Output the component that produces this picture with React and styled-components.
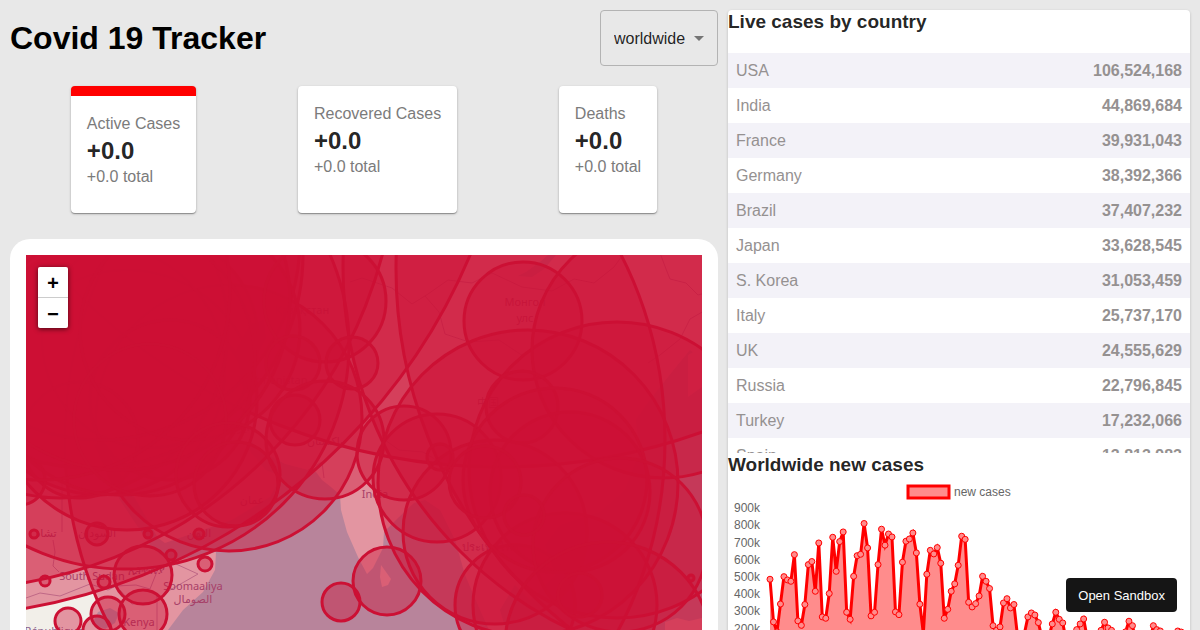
import { useState } from 'react'
import styled, { createGlobalStyle } from 'styled-components'

const countries = [
    { name: 'USA', cases: 106524168 },
    { name: 'India', cases: 44869684 },
    { name: 'France', cases: 39931043 },
    { name: 'Germany', cases: 38392366 },
    { name: 'Brazil', cases: 37407232 },
    { name: 'Japan', cases: 33628545 },
    { name: 'S. Korea', cases: 31053459 },
    { name: 'Italy', cases: 25737170 },
    { name: 'UK', cases: 24555629 },
    { name: 'Russia', cases: 22796845 },
    { name: 'Turkey', cases: 17232066 },
    { name: 'Spain', cases: 13813983 },
]

// new cases per day, in thousands
const history = [
    487, 239, 181, 343, 502, 483, 475, 630, 245, 219, 340, 572, 590, 417, 698,
    268, 260, 404, 731, 533, 706, 762, 295, 254, 504, 624, 632, 811, 669, 274,
    295, 572, 778, 685, 750, 733, 297, 281, 586, 708, 721, 756, 640, 342, 171,
    516, 655, 634, 671, 580, 260, 312, 417, 460, 568, 737, 719, 353, 326, 345,
    390, 504, 475, 433, 217, 190, 210, 349, 374, 320, 340, 161, 150, 171, 268,
    291, 279, 235, 150, 140, 150, 227, 295, 254, 233, 132, 125, 150, 194, 227,
    256, 150, 132, 130, 150, 190, 237, 204, 190, 150, 130, 130, 181, 243, 217,
    130, 110, 110, 115, 130, 217, 194, 186, 120, 100, 100, 150, 186, 180,
]

// cx, cy, rx, ry (ry only where the projection stretches the circle)
const circles = [
    [-76, 24, 593], [-51, 141, 448], [365, 440, 300, 355], [500, -135, 602],
    [744, 268, 401], [854, 269, 458], [125, 345, 224], [229, 418, 133],
    [127, 400, 130], [100, 370, 125], [150, 340, 108], [60, 330, 168],
    [170, 400, 80], [80, 440, 58], [100, 240, 200], [20, 480, 25],
    [90, 255, 213], [120, 360, 135], [190, 330, 110],
    [40, 290, 190], [120, 300, 170], [150, 420, 76], [228, 475, 52],
    [236, 484, 42], [325, 301, 61], [293, 363, 27], [295, 420, 25],
    [352, 363, 26], [325, 440, 59], [404, 453, 47], [437, 478, 64],
    [523, 321, 59], [528, 483, 150, 153], [617, 470, 148], [663, 350, 131, 128],
    [522, 407, 36], [495, 532, 92], [515, 605, 60], [565, 605, 92],
    [570, 492, 80], [555, 480, 92],
    [620, 545, 87], [608, 645, 103], [580, 595, 22], [485, 482, 36],
    [440, 457, 13], [524, 515, 20], [387, 581, 34], [341, 602, 19],
    [34, 534, 4], [97, 534, 11], [148, 534, 4], [199, 534, 5], [171, 555, 5],
    [205, 564, 7], [45, 581, 5], [104, 582, 6], [143, 575, 29], [143, 614, 24],
    [108, 614, 17], [68, 621, 13], [97, 630, 14], [691, 578, 3],
]

const App = () => {
    const [country, setCountry] = useState('worldwide')

    return (
        <Page>
            <GlobalStyle />
            <Left>
                <Header>
                    <Title>Covid 19 Tracker</Title>
                    <SelectBox>
                        <Select aria-label="Country" value={country} onChange={e => setCountry(e.target.value)}>
                            <option value="worldwide">worldwide</option>
                            {countries.map(c => <option key={c.name} value={c.name}>{c.name}</option>)}
                        </Select>
                        <Arrow viewBox="0 0 24 24"><path d="M7 10l5 5 5-5z" /></Arrow>
                    </SelectBox>
                </Header>
                <Stats>
                    <InfoBox title="Active Cases" active />
                    <InfoBox title="Recovered Cases" />
                    <InfoBox title="Deaths" />
                </Stats>
                <MapCard>
                    <Map />
                    <ZoomBar>
                        <ZoomButton aria-label="Zoom in">+</ZoomButton>
                        <ZoomButton aria-label="Zoom out">−</ZoomButton>
                    </ZoomBar>
                </MapCard>
            </Left>
            <Right>
                <Subtitle>Live cases by country</Subtitle>
                <TableBox>
                    <Table>
                        <tbody>
                            {countries.map(c => (
                                <Row key={c.name}>
                                    <Cell>{c.name}</Cell>
                                    <Cell $num>{c.cases.toLocaleString('en-US')}</Cell>
                                </Row>
                            ))}
                        </tbody>
                    </Table>
                </TableBox>
                <Subtitle>Worldwide new cases</Subtitle>
                <Chart />
            </Right>
            <Sandbox>Open Sandbox</Sandbox>
        </Page>
    )
}

const InfoBox = ({ title, active }) => (
    <Card $active={active}>
        <Muted>{title}</Muted>
        <Count>+0.0</Count>
        <Muted>+0.0 total</Muted>
    </Card>
)

const Map = () => (
    <MapSvg viewBox="26 255 676 500" preserveAspectRatio="xMinYMin slice">
        <rect x="26" y="255" width="2000" height="1500" fill="#aad3df" />
        <g fill="#f2efe9">
            <path d="M26 255H702V360L690 350 672 372 650 400 636 420 640 450 625 490 600 512 560 525 545 545 555 575 530 600 515 585 500 610 515 660 505 665 480 610 465 575 455 540 440 510 425 500 414 503 398 518 384 532 383 548 373 568 367 574 358 557 347 532 341 510 340 495 331 487 322 480 316 472 285 464 262 452 250 440 246 446 266 470 282 476 270 497 232 520 165 543 158 538 130 490 100 440 94 445 120 500 150 545 162 556 178 560 216 552 215 570 203 592 183 610 168 630 160 660 150 755H26z" />
            <path d="M381 565L391 579 388 585 382 587 380 577z" />
            <path d="M665 622l12-4 12 3 13-3v30h-37z" />
            <path d="M688 355l14-8v40l-14 10z" />
        </g>
        <g fill="#aad3df">
            <path d="M92 624l6-12 12-4 9 5-4 10-10 6z" />
            <path d="M236 350l14-26 14-4 2 18-10 20 4 30-16 6z" />
            <path d="M518 276l8-4 14-10 8-7h8l-12 14-12 8z" />
        </g>
        <g fill="none" stroke="#b6a3bd" strokeWidth="1">
            <path d="M26 598l14-5 20 3 10-4 20-8 18 6 8-4 20-1 14 4 8-20M53 540l2 12-2 14 6 6M120 590l12 14 24-2 14-12 28-16-22-10M157 595v35M62 480v52" />
            <path d="M350 282l12-4 30 10 20 16 16-10 20-14 24 3 20-10 30 14 30 4 22-12 20 4 20-16 16-22 18-2 12 10 6 16 4 10 16 4 12 12 14-4-8 20-14 8-10 20-20 16-12 8" />
            <path d="M425 296l14 16 6 22 24 8 30-2 24 16M308 470l14-8 2 16M385 440l14 10 24 2 20 12" />
        </g>
        <Labels>
            <text x="46" y="537">تشاد</text>
            <text x="97" y="537">السودان</text>
            <text x="199" y="537">اليمن</text>
            <text x="92" y="580">South Sudan</text>
            <text x="146" y="574">ኢትዮጵያ</text>
            <text x="193" y="590">Soomaaliya</text>
            <text x="193" y="603">الصومال</text>
            <text x="139" y="626">Kenya</text>
            <text x="54" y="635">République</text>
            <text x="375" y="498">India</text>
            <text x="302" y="314">Қазақстан</text>
            <text x="272" y="384">Türkmenistan</text>
            <text x="238" y="431">ایران</text>
            <text x="325" y="445">پاکستان</text>
            <text x="252" y="504">عمان</text>
            <text x="525" y="306">Монгол</text>
            <text x="525" y="322">улс</text>
            <text x="488" y="407">中国</text>
            <text x="490" y="551">ประเทศไทย</text>
        </Labels>
        <g fill="#cc1034" fillOpacity="0.4" stroke="#cc1034" strokeWidth="3">
            {circles.map(([cx, cy, rx, ry = rx], i) => <ellipse key={i} cx={cx} cy={cy} rx={rx} ry={ry} />)}
        </g>
    </MapSvg>
)

const Chart = () => {
    // 100k is 17.2 units tall, the axis starts at y = 187
    const points = history.map((n, i) => [42 + i * 3.485, 187 - n * 0.172])
    const line = points.map(p => p.join(' ')).join('L')
    const last = points[points.length - 1][0]

    return (
        <ChartSvg viewBox="0 0 462 231" role="img" aria-label="Worldwide new cases">
            <rect x="180" y="10" width="41" height="12" fill="#ff8c8c" stroke="red" strokeWidth="3" />
            <text x="226" y="20">new cases</text>
            {[900, 800, 700, 600, 500, 400, 300, 200, 100].map(n => (
                <text key={n} x="32" y={191 - n * 0.172} textAnchor="end">{n}k</text>
            ))}
            <path d={`M42 187L${line}L${last} 187z`} fill="#ff8c8c" />
            <path d={`M${line}`} fill="none" stroke="red" strokeWidth="3" />
            {points.map(([x, y], i) => (
                <circle key={i} cx={x} cy={y} r="3" fill="#ff8c8c" stroke="red" />
            ))}
        </ChartSvg>
    )
}

const GlobalStyle = createGlobalStyle`
    *{
        box-sizing:border-box;
        margin:0;
    }
    html{
        scrollbar-width:none;
    }
    body{
        background:#e8e8e8;
        color:rgba(0,0,0,0.87);
        font-family:"Liberation Sans", Arial, sans-serif;
        font-size:16px;
    }
`;

const Page = styled.div`
    display:flex;
    gap:10px;
    padding:10px;
`;

const Left = styled.div`
    flex:0 0 60%;
    min-width:0;
`;

const Header = styled.div`
    display:flex;
    align-items:center;
    justify-content:space-between;
    margin-bottom:20px;
`;

const Title = styled.h1`
    font-size:32px;
    color:#000;
`;

const SelectBox = styled.div`
    position:relative;
`;

const Select = styled.select`
    appearance:none;
    width:118px;
    height:56px;
    padding:0 13px;
    border:1px solid #b3b3b3;
    border-radius:4px;
    background:transparent;
    color:rgba(0,0,0,0.87);
    font:inherit;
`;

const Arrow = styled.svg`
    position:absolute;
    top:16px;
    right:7px;
    width:24px;
    height:24px;
    fill:#757575;
    pointer-events:none;
`;

const Stats = styled.div`
    display:flex;
    justify-content:space-around;
    padding:0 10px;
    margin-bottom:26px;
`;

const Card = styled.div`
    padding:16px 16px 24px;
    border-top:${p => p.$active ? '10px solid red' : 'none'};
    border-radius:4px;
    background:#fff;
    box-shadow:0 1px 1px rgba(0,0,0,0.3), 0 1px 3px rgba(0,0,0,0.2);
`;

const Muted = styled.p`
    color:#7b7b7b;
    line-height:24px;
`;

const Count = styled.h2`
    font-size:24px;
    line-height:29px;
`;

const MapCard = styled.div`
    position:relative;
    padding:16px;
    border-radius:20px;
    background:#fff;
`;

const MapSvg = styled.svg`
    display:block;
    width:100%;
    height:500px;
`;

const Labels = styled.g`
    fill:#8d618b;
    font-family:"Noto Sans", "DejaVu Sans", "Noto Sans CJK SC", sans-serif;
    font-size:11px;
    text-anchor:middle;
`;

const ZoomBar = styled.div`
    position:absolute;
    top:28px;
    left:28px;
    display:flex;
    flex-direction:column;
    border-radius:2px;
    overflow:hidden;
    box-shadow:0 1px 5px rgba(0,0,0,0.65);
`;

const ZoomButton = styled.button`
    width:30px;
    height:30px;
    padding:6px 0 0;
    border:0;
    background:#fff;
    color:#000;
    font:bold 20px/24px "Liberation Mono", monospace;
    &:first-child{
        height:31px;
        border-bottom:1px solid #ccc;
    }
`;

const Right = styled.div`
    flex:1;
    min-width:0;
    border-radius:4px;
    background:#fff;
    box-shadow:0 1px 3px rgba(0,0,0,0.2);
`;

const Subtitle = styled.h3`
    font-size:19px;
    line-height:23px;
`;

const TableBox = styled.div`
    height:400px;
    margin-top:20px;
    overflow-y:scroll;
    scrollbar-width:none;
`;

const Table = styled.table`
    width:100%;
    border-collapse:collapse;
    color:#959191;
`;

const Row = styled.tr`
    height:35px;
    &:nth-child(odd){
        background:#f3f2f8;
    }
`;

const Cell = styled.td`
    padding:0 8px;
    text-align:${p => p.$num ? 'right' : 'left'};
    font-weight:${p => p.$num ? 'bold' : 'normal'};
`;

const ChartSvg = styled.svg`
    display:block;
    width:100%;
    font-size:12px;
    fill:#666;
`;

const Sandbox = styled.button`
    position:fixed;
    right:23px;
    bottom:18px;
    height:34px;
    padding:0 12px;
    border:0;
    border-radius:4px;
    background:#151515;
    color:#fff;
    font:13px "Liberation Sans", Arial, sans-serif;
`;

export default App;
